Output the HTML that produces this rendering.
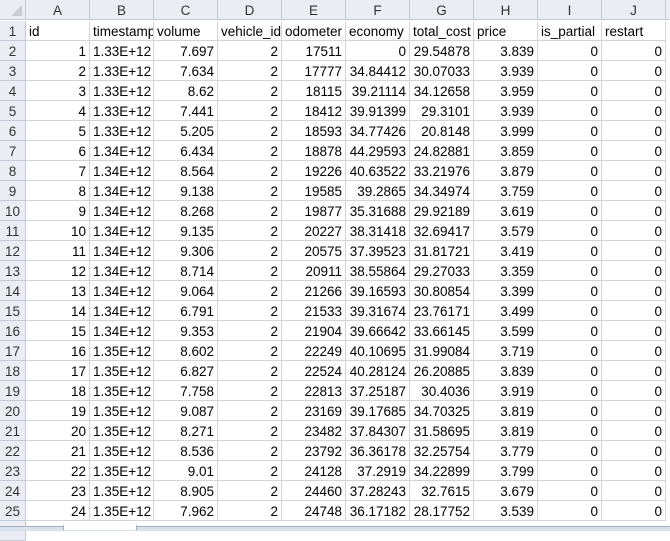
<!DOCTYPE html>
<html><head><style>
body{margin:0;width:670px;height:530px;overflow:hidden;background:#fff;font-family:"Liberation Sans",sans-serif;font-size:13.5px;position:relative}
.c{position:absolute;height:20px;line-height:21px;box-sizing:border-box;border-right:1px solid #d4d4d4;border-bottom:1px solid #d4d4d4;padding:0 3px;white-space:nowrap;overflow:hidden;text-align:right;color:#000}
.h{background:#eaeef4;border-color:#c5cbd4;text-align:center;color:#333}
.l{text-align:left}
</style></head><body>
<div id="g"></div>
<div style="position:absolute;left:0;top:526px;width:670px;height:4px;background:#dbe1ea;border-top:1px solid #a8b0bc"></div>
<div style="position:absolute;left:63px;top:525px;width:72px;height:5px;background:#fff;border-left:1px solid #a8b0bc;border-right:1px solid #a8b0bc"></div>
<script>
var xs=[0,26,90,154,218,282,346,410,474,538,602,666];
var cols="ABCDEFGHIJ";
var hdr=["id","timestamp","volume","vehicle_id","odometer","economy","total_cost","price","is_partial","restart"];
var data=[
[1,"1.33E+12",7.697,2,17511,0,29.54878,3.839],
[2,"1.33E+12",7.634,2,17777,34.84412,30.07033,3.939],
[3,"1.33E+12",8.62,2,18115,39.21114,34.12658,3.959],
[4,"1.33E+12",7.441,2,18412,39.91399,29.3101,3.939],
[5,"1.33E+12",5.205,2,18593,34.77426,20.8148,3.999],
[6,"1.34E+12",6.434,2,18878,44.29593,24.82881,3.859],
[7,"1.34E+12",8.564,2,19226,40.63522,33.21976,3.879],
[8,"1.34E+12",9.138,2,19585,39.2865,34.34974,3.759],
[9,"1.34E+12",8.268,2,19877,35.31688,29.92189,3.619],
[10,"1.34E+12",9.135,2,20227,38.31418,32.69417,3.579],
[11,"1.34E+12",9.306,2,20575,37.39523,31.81721,3.419],
[12,"1.34E+12",8.714,2,20911,38.55864,29.27033,3.359],
[13,"1.34E+12",9.064,2,21266,39.16593,30.80854,3.399],
[14,"1.34E+12",6.791,2,21533,39.31674,23.76171,3.499],
[15,"1.34E+12",9.353,2,21904,39.66642,33.66145,3.599],
[16,"1.35E+12",8.602,2,22249,40.10695,31.99084,3.719],
[17,"1.35E+12",6.827,2,22524,40.28124,26.20885,3.839],
[18,"1.35E+12",7.758,2,22813,37.25187,30.4036,3.919],
[19,"1.35E+12",9.087,2,23169,39.17685,34.70325,3.819],
[20,"1.35E+12",8.271,2,23482,37.84307,31.58695,3.819],
[21,"1.35E+12",8.536,2,23792,36.36178,32.25754,3.779],
[22,"1.35E+12",9.01,2,24128,37.2919,34.22899,3.799],
[23,"1.35E+12",8.905,2,24460,37.28243,32.7615,3.679],
[24,"1.35E+12",7.962,2,24748,36.17182,28.17752,3.539]];
var h="";
function cell(x,y,w,t,cls){h+='<div class="c '+cls+'" style="left:'+x+'px;top:'+y+'px;width:'+w+'px">'+t+'</div>';}
cell(0,0,26,'<span style="position:absolute;right:3px;bottom:3px;width:0;height:0;border-left:11px solid transparent;border-bottom:11px solid #c9ced6"></span>','h');
for(var i=0;i<10;i++)cell(xs[i+1],0,xs[i+2]-xs[i+1],cols[i],'h');
cell(666,0,4,'','h');
for(var r=0;r<25;r++){
 var y=21+r*20;
 cell(0,y,26,r+1,'h');
 for(var i=0;i<10;i++){
  var t,cls='';
  if(r==0){t=hdr[i];cls='l';}
  else{var d=data[r-1];t=i<8?d[i]:0;}
  cell(xs[i+1],y,xs[i+2]-xs[i+1],t,cls);
 }
}
cell(0,521,26,'','h');
document.getElementById('g').innerHTML=h;
</script>
</body></html>
